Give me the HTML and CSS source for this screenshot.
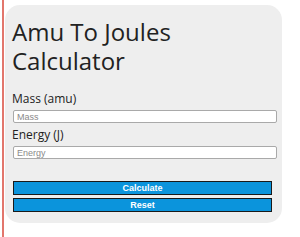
FILE: index.html
```html
<!DOCTYPE html>
<html lang="en">
<head>
    <meta charset="UTF-8">
    <meta name="viewport" content="width=device-width, initial-scale=1.0">
    <title>Amu To Joules Calculator</title>
    <link rel="stylesheet" href="styles.css">
</head>
<body>
    <div id="page">
        <div id="calc">
            <h1 class="title">Amu To Joules Calculator</h1>

            <label class="label" for="mass">Mass (amu)</label>
            <input class="field" type="text" id="mass" placeholder="Mass">

            <label class="label" for="energy">Energy (J)</label>
            <input class="field" type="text" id="energy" placeholder="Energy">

            <div class="buttons">
                <input class="btn" type="button" value="Calculate">
                <input class="btn" type="button" value="Reset">
            </div>
        </div>
    </div>
</body>
</html>
```

FILE: styles.css
```css
html,
body {
    margin: 0;
    height: 100%;
    background: #fff;
}

#page {
    height: 100%;
    margin-left: 2px;
    border-left: 2px solid #e2766c;
    padding: 5px 0 0 1px;
    box-sizing: border-box;
}

#calc {
    width: 277px;
    height: 218px;
    box-sizing: border-box;
    padding: 12px 5px 0 7px;
    background: #eeeeee;
    border-radius: 15px;
    font-family: "Open Sans", sans-serif;
    color: #222;
}

.title {
    margin: 0 0 12px 0;
    font-size: 24px;
    font-weight: 400;
    line-height: 29px;
}

.label {
    display: block;
    font-size: 12px;
    line-height: 23px;
}

.field {
    display: block;
    width: 264px;
    height: 13px;
    margin: 0 0 0 1px;
    padding: 0 3px;
    box-sizing: border-box;
    border: 1px solid #a9a9a9;
    border-radius: 2px;
    font-family: "Liberation Sans", Arial, sans-serif;
    font-size: 9px;
    background: #fff;
}

.field::placeholder {
    color: #8a8a8a;
}

.buttons {
    margin-top: 22px;
}

.btn {
    display: block;
    width: 259px;
    height: 14px;
    margin: 0 0 3px 1px;
    padding: 0;
    border: 1px solid #1a1a1a;
    background: #0b94dc;
    color: #fff;
    font-family: "Liberation Sans", Arial, sans-serif;
    font-weight: bold;
    font-size: 9px;
}
```
